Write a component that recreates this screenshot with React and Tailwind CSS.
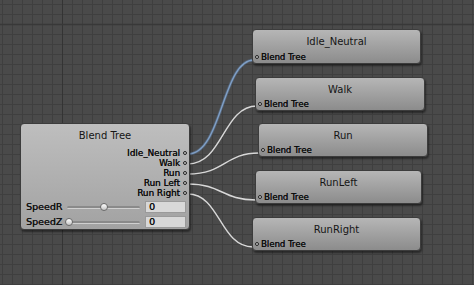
import React from "react";

const font = { fontFamily: '"DejaVu Sans", "Liberation Sans", sans-serif' };

function Port() {
  return <span className="inline-block w-[4px] h-[4px] rounded-full border border-[#222] bg-[#c8c8c8] shrink-0" />;
}

function TargetNode({ title, cls }) {
  return (
    <div
      className={`absolute ${cls} rounded-[4px] border border-[#3c3c3c] bg-gradient-to-b from-[#b6b6b6] to-[#8c8c8c] shadow-[1px_2px_2px_rgba(0,0,0,0.45)] flex flex-col`}
    >
      <div className="h-[11px] mt-[6px] flex items-center justify-center text-[10px] leading-none text-[#151515]">{title}</div>
      <div className="flex-1" />
      <div className="h-[10px] mb-[1px] flex items-center gap-[2px] pl-[2px] text-[8.5px] leading-none text-[#0a0a0a] [text-shadow:0.25px_0_0_#111]">
        <Port />
        <span>Blend Tree</span>
      </div>
    </div>
  );
}

function OutRow({ label }) {
  return (
    <div className="h-[10px] flex items-center justify-end gap-[3px] pr-[2px] text-[8.8px] leading-none text-[#0a0a0a] [text-shadow:0.25px_0_0_#111]">
      <span>{label}</span>
      <Port />
    </div>
  );
}

export default function App() {
  return (
    <div className="relative w-[474px] h-[285px] overflow-hidden bg-[#4a4a4a]" style={font}>
      <svg className="absolute inset-0" width="474" height="285">
        <defs>
          <pattern id="g" x="2" y="4" width="10" height="10" patternUnits="userSpaceOnUse">
            <path d="M0 0.5 H10 M0.5 0 V10" stroke="#3f3f3f" strokeWidth="1" fill="none" />
          </pattern>
        </defs>
        <rect width="474" height="285" fill="url(#g)" />
        <line x1="62.5" y1="0" x2="62.5" y2="285" stroke="#343434" strokeWidth="1" />
        <line x1="0" y1="24.5" x2="474" y2="24.5" stroke="#383838" strokeWidth="1.5" />
        <path d="M188 154 C 222 154, 222 60, 254 60" stroke="#5f7fa6" strokeWidth="3" fill="none" opacity="0.45" />
        <path d="M188 154 C 222 154, 222 60, 254 60" stroke="#7f9fc6" strokeWidth="1.4" fill="none" />
        <path d="M188 164 C 223 164, 223 106, 257 106" stroke="#d8d8d8" strokeWidth="1.4" fill="none" />
        <path d="M188 174 C 225 174, 225 153, 259 153" stroke="#d8d8d8" strokeWidth="1.4" fill="none" />
        <path d="M188 184 C 222 184, 222 200, 256 200" stroke="#d8d8d8" strokeWidth="1.4" fill="none" />
        <path d="M188 194 C 220 194, 220 247, 253 247" stroke="#d8d8d8" strokeWidth="1.4" fill="none" />
      </svg>

      {/* Blend Tree node */}
      <div className="absolute left-[20px] top-[123px] w-[170px] h-[107px] rounded-[4px] border border-[#3c3c3c] bg-gradient-to-b from-[#bebebe] to-[#a2a2a2] shadow-[1px_2px_2px_rgba(0,0,0,0.45)] flex flex-col">
        <div className="h-[12px] mt-[6px] flex items-center justify-center text-[10px] leading-none text-[#151515]">Blend Tree</div>
        <div className="mt-[6px] flex flex-col">
          <OutRow label="Idle_Neutral" />
          <OutRow label="Walk" />
          <OutRow label="Run" />
          <OutRow label="Run Left" />
          <OutRow label="Run Right" />
        </div>
        <div className="mt-[3px] h-[12px] flex items-center pl-[5px] text-[9.5px] leading-none text-[#111] [text-shadow:0.2px_0_0_#111]">
          <span className="w-[41px] overflow-hidden whitespace-nowrap">SpeedR</span>
          <div className="relative w-[73px] h-[12px] flex items-center">
            <div className="w-full h-[3px] rounded-full bg-[#8a8a8a] border-b border-[#d0d0d0]" />
            <span className="absolute left-[33px] top-[2px] w-[8px] h-[8px] rounded-full bg-gradient-to-b from-[#ffffff] to-[#c4c4c4] border border-[#6a6a6a]" />
          </div>
          <div className="ml-[5px] w-[41px] h-[12px] bg-[#d8d8d8] border border-[#9a9a9a] flex items-center pl-[3px] text-[9.5px]">0</div>
        </div>
        <div className="mt-[3px] h-[12px] flex items-center pl-[5px] text-[9.5px] leading-none text-[#111] [text-shadow:0.2px_0_0_#111]">
          <span className="w-[41px] overflow-hidden whitespace-nowrap">SpeedZ</span>
          <div className="relative w-[73px] h-[12px] flex items-center">
            <div className="w-full h-[3px] rounded-full bg-[#8a8a8a] border-b border-[#d0d0d0]" />
            <span className="absolute left-[-2px] top-[2px] w-[8px] h-[8px] rounded-full bg-gradient-to-b from-[#ffffff] to-[#c4c4c4] border border-[#6a6a6a]" />
          </div>
          <div className="ml-[5px] w-[41px] h-[12px] bg-[#d8d8d8] border border-[#9a9a9a] flex items-center pl-[3px] text-[9.5px]">0</div>
        </div>
      </div>

      <TargetNode title="Idle_Neutral" cls="left-[252px] top-[29px] w-[169px] h-[35px]" />
      <TargetNode title="Walk" cls="left-[255px] top-[77px] w-[170px] h-[34px]" />
      <TargetNode title="Run" cls="left-[258px] top-[123px] w-[170px] h-[34px]" />
      <TargetNode title="RunLeft" cls="left-[255px] top-[170px] w-[167px] h-[34px]" />
      <TargetNode title="RunRight" cls="left-[252px] top-[217px] w-[169px] h-[34px]" />
    </div>
  );
}
